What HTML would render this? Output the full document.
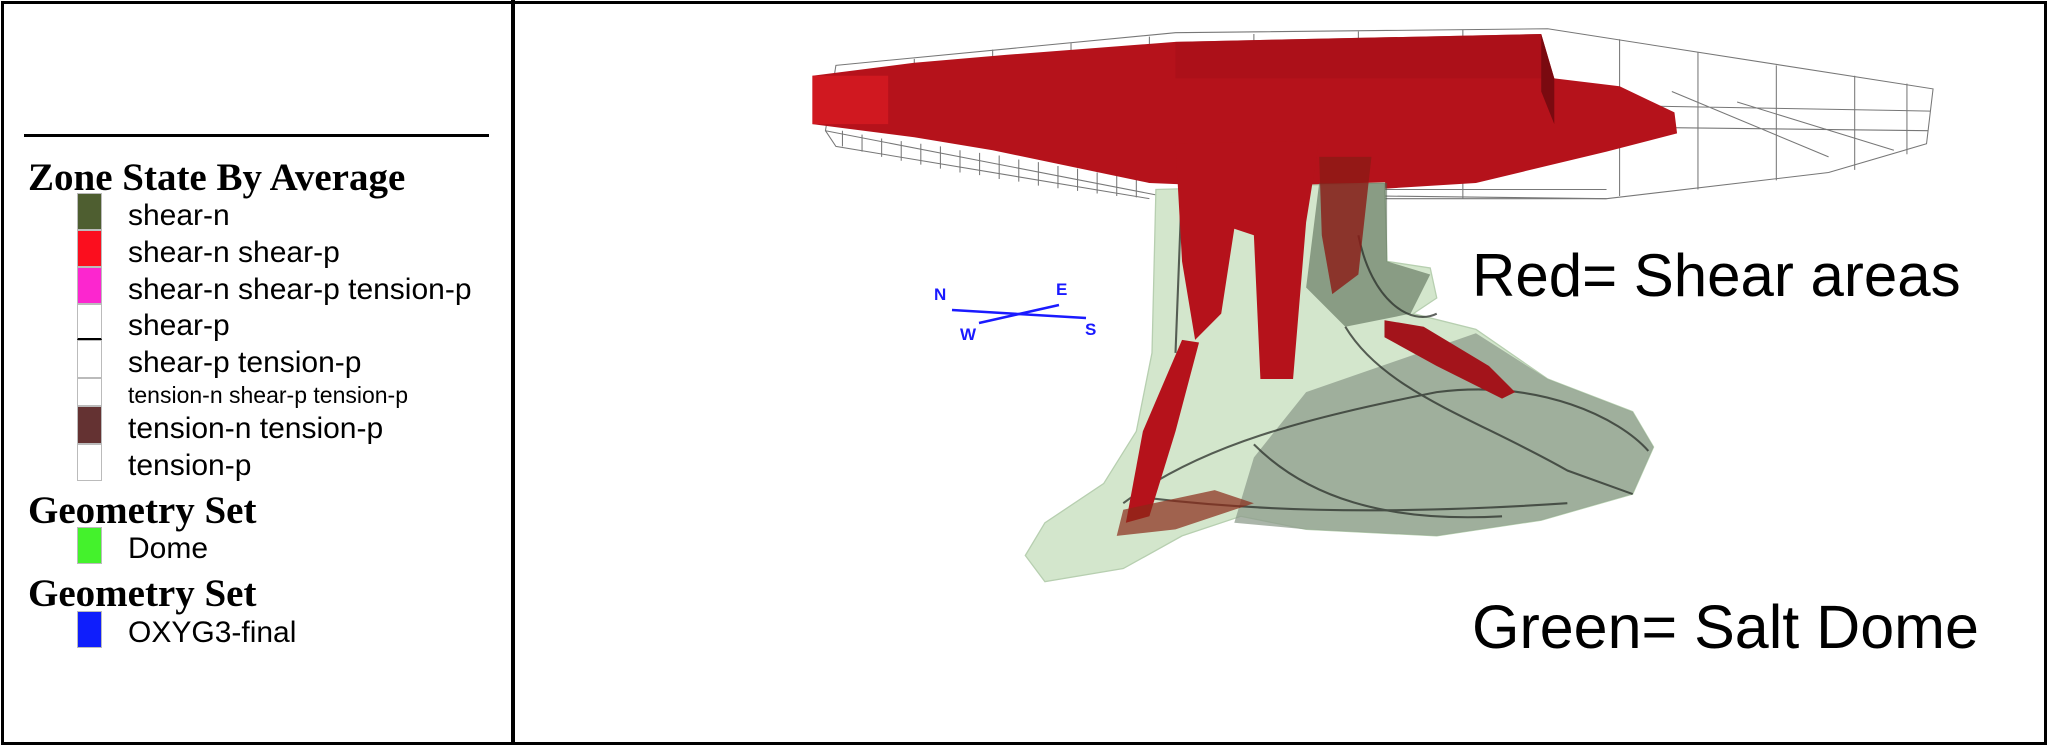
<!DOCTYPE html>
<html><head><meta charset="utf-8"><style>
html,body{margin:0;padding:0;background:#fff;}
#p{position:relative;width:2048px;height:745px;overflow:hidden;background:#fff;font-family:"Liberation Sans",Arial,sans-serif;}
.frame{position:absolute;left:1px;top:1px;width:2040px;height:738px;border:3px solid #000;}
.div{position:absolute;left:511px;top:0;width:4px;height:745px;background:#000;}
.hl{position:absolute;left:24px;top:134px;width:465px;height:3px;background:#000;}
.h{position:absolute;left:28px;font-family:"Liberation Serif",serif;font-weight:bold;font-size:39px;line-height:1;}
.sw{position:absolute;left:77px;width:25px;border:1px solid #bbb;box-sizing:border-box;}
.t{position:absolute;left:128px;font-size:30px;line-height:1;color:#000;}
.big{position:absolute;left:1472px;font-size:60px;line-height:1;color:#000;}
.c{position:absolute;color:#1a1aff;font-weight:bold;font-size:17px;line-height:1;}
</style></head><body><div id="p">
<svg style="position:absolute;left:0;top:0" width="2048" height="745" viewBox="0 0 1568 570" preserveAspectRatio="none">
 <g stroke="#777" stroke-width="0.8" fill="none">
  <path d="M640,50 L900,25 L1185,22 L1480,68 L1475,110 L1400,132 L1230,152 L900,152 L632,100 Z"/>
  <path d="M700,45 L700,100 M760,38 L760,110 M820,33 L820,122 M880,28 L880,140 M960,26 L960,150 M1040,24 L1040,152 M1120,23 L1120,152 M1240,30 L1240,150 M1300,40 L1300,145 M1360,50 L1360,138 M1420,58 L1420,130 M1460,64 L1460,118"/>
  <path d="M640,70 L1478,85 M632,90 L1476,100 M900,145 L1230,145 M1280,70 L1400,120 M1330,78 L1450,115"/>
  <path d="M645,100 L645,112 M660,103 L660,116 M675,106 L675,120 M690,108 L690,123 M705,110 L705,126 M720,112 L720,129 M735,115 L735,132 M750,117 L750,134 M765,119 L765,137 M780,122 L780,139 M795,124 L795,142 M810,127 L810,144 M825,129 L825,146 M840,132 L840,148 M855,134 L855,150 M870,137 L870,151"/>
  <path d="M632,100 L640,112 L880,152 M1060,150 L1230,152"/>
 </g>
 <path d="M622,58 L700,48 L770,42 L900,32 L1180,26 L1190,60 L1240,66 L1282,86 L1284,102 L1230,116 L1130,140 L1050,145 L1000,145 L880,140 L760,115 L700,105 L622,95 Z" fill="#b5121b"/>
 <path d="M622,58 L680,58 L680,95 L622,95 Z" fill="#d01820"/>
 <path d="M900,32 L1180,26 L1180,60 L900,60 Z" fill="#a80f18" opacity=".7"/>
 <path d="M1180,26 L1190,60 L1190,95 L1180,70 Z" fill="#7a0a10"/>
 <path d="M885,145 L1060,140 L1062,200 L1095,205 L1100,228 L1082,240 L1130,252 L1185,290 L1250,315 L1266,342 L1250,378 L1180,398 L1100,410 L1000,405 L950,395 L905,410 L860,435 L800,445 L785,425 L800,400 L845,370 L870,330 L882,270 Z" fill="#d3e6cc" stroke="#b7cfb0" stroke-width="1"/>
 <path d="M1000,300 L1130,255 L1185,290 L1250,315 L1266,342 L1250,378 L1180,398 L1100,410 L1000,405 L945,400 L960,350 Z" fill="#8e9c8c" opacity=".75"/>
 <path d="M1010,140 L1062,140 L1062,200 L1095,210 L1080,240 L1030,250 L1000,220 Z" fill="#4c5f48" opacity=".55"/>
 <g stroke="#2a2f2a" stroke-width="1.6" fill="none" opacity=".75">
  <path d="M860,385 C920,340 1000,320 1100,300 C1180,290 1240,320 1262,345"/>
  <path d="M870,380 C950,390 1050,395 1200,385"/>
  <path d="M1030,250 C1060,300 1130,320 1200,360 L1250,378"/>
  <path d="M905,140 L900,270 M1040,180 C1050,230 1080,250 1100,240"/>
  <path d="M960,340 C1000,380 1060,400 1150,395"/>
 </g>
 <path d="M900,110 L1010,108 L1000,170 L990,290 L965,290 L960,180 L945,175 L935,240 L915,260 L905,200 Z" fill="#b5121b"/>
 <path d="M905,260 L918,262 L900,330 L880,395 L862,400 L875,330 Z" fill="#b5121b"/>
 <path d="M1060,245 L1090,250 L1140,280 L1160,300 L1150,305 L1100,280 L1060,258 Z" fill="#a3141b"/>
 <path d="M1010,120 L1050,120 L1040,210 L1020,225 L1012,180 Z" fill="#8c1a15" opacity=".8"/>
 <path d="M860,390 L930,375 L960,385 L900,405 L855,410 Z" fill="#8a2a18" opacity=".7"/>
</svg>
<div class="frame"></div><div class="div"></div><div class="hl"></div>
<div class="h" style="top:158px">Zone State By Average</div>
<div class="sw" style="top:193px;height:37px;background:#4e5e30"></div>
<div class="sw" style="top:230px;height:37px;background:#fb0e1e"></div>
<div class="sw" style="top:267px;height:37px;background:#fc26cf"></div>
<div class="sw" style="top:304px;height:36px;background:#fff;border-bottom:2px solid #000"></div>
<div class="sw" style="top:340px;height:38px;background:#fff"></div>
<div class="sw" style="top:378px;height:28px;background:#fff"></div>
<div class="sw" style="top:406px;height:38px;background:#643232"></div>
<div class="sw" style="top:444px;height:37px;background:#fff"></div>
<div class="t" style="top:201px">shear-n</div>
<div class="t" style="top:238px">shear-n shear-p</div>
<div class="t" style="top:275px">shear-n shear-p tension-p</div>
<div class="t" style="top:311px">shear-p</div>
<div class="t" style="top:348px">shear-p tension-p</div>
<div class="t" style="top:384px;font-size:23px">tension-n shear-p tension-p</div>
<div class="t" style="top:414px">tension-n tension-p</div>
<div class="t" style="top:451px">tension-p</div>
<div class="h" style="top:491px">Geometry Set</div>
<div class="sw" style="top:527px;height:37px;background:#44f22c"></div>
<div class="t" style="top:534px">Dome</div>
<div class="h" style="top:574px">Geometry Set</div>
<div class="sw" style="top:611px;height:37px;background:#0f1efc"></div>
<div class="t" style="top:618px">OXYG3-final</div>
<svg style="position:absolute;left:0;top:0" width="2048" height="745"><g stroke="#1a1aff" stroke-width="2.5"><line x1="952" y1="310" x2="1086" y2="318"/><line x1="979" y1="323" x2="1059" y2="305"/></g></svg>
<div class="c" style="left:934px;top:286px">N</div>
<div class="c" style="left:1056px;top:281px">E</div>
<div class="c" style="left:960px;top:326px">W</div>
<div class="c" style="left:1085px;top:321px">S</div>
<div class="big" style="top:246px">Red= Shear areas</div>
<div class="big" style="top:597px;font-size:61px">Green= Salt Dome</div>
</div></body></html>
